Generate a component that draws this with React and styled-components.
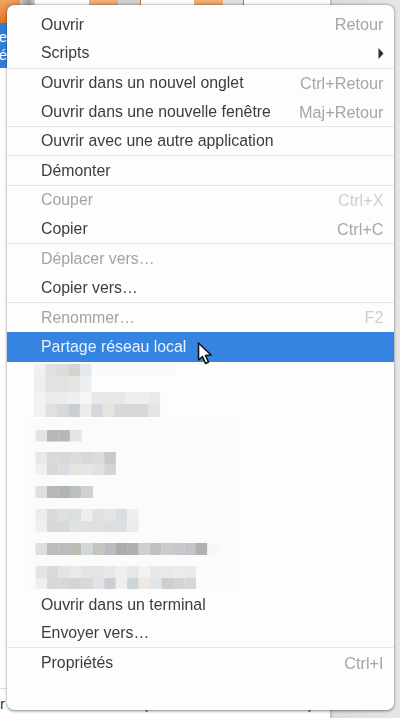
import React from "react";
import styled, { createGlobalStyle } from "styled-components";

const Global = createGlobalStyle`
  html, body { margin: 0; padding: 0; background: #fff; }
  body { width: 400px; height: 718px; overflow: hidden; font-family: "Liberation Sans", Arial, sans-serif; }
`;

const Stage = styled.div`
  position: relative;
  width: 400px;
  height: 718px;
  overflow: hidden;
  display: flex;
`;

const Files = styled.div`
  width: 330px;
  height: 718px;
  background: #fff;
  display: flex;
  flex-direction: column;
`;

const Side = styled.div`
  flex: 1;
  background: linear-gradient(90deg, #b8b8b8 0, #dcdcdc 3px, #e6e6e6 100%);
`;

const Strip = styled.div`
  display: flex;
  height: 23px;
`;

const Piece = styled.div`
  width: ${p => p.$w}px;
  background: ${p => p.$bg};
  ${p => p.$edge ? "border-right: 1px solid #d2604a; box-sizing: border-box;" : ""}
`;

const Tile = styled.div`
  width: 7px;
  height: 45px;
  background: #2f7fd8;
  color: #fff;
  font-size: 15px;
  line-height: 18px;
  display: flex;
  flex-direction: column;
  align-items: flex-end;
  padding-top: 5px;
  box-sizing: border-box;
  overflow: hidden;
`;

const FooterRule = styled.div`
  height: 1px;
  background: #dcdcdc;
  margin-top: auto;
  margin-bottom: 7px;
`;

const FooterLine = styled.div`
  display: flex;
  height: 22px;
  color: #333;
  font-size: 15px;
  line-height: 16px;
`;

const FooterMark = styled.span`
  width: ${p => p.$w}px;
  flex: none;
`;

const Menu = styled.div`
  position: absolute;
  left: 6.5px;
  top: 5px;
  width: 387px;
  height: 705px;
  box-sizing: border-box;
  padding-top: 5px;
  background: #fdfdfd;
  border-radius: 7px;
  box-shadow: 0 0.5px 3px rgba(0, 0, 0, 0.5);
  overflow: hidden;
`;

const Row = styled.div`
  height: 29.3px;
  box-sizing: border-box;
  display: flex;
  align-items: center;
  justify-content: space-between;
  padding: 0 10px 0 34.5px;
  font-size: 15.85px;
  white-space: nowrap;
  color: ${p => (p.$active ? "#eaf2fc" : p.$off ? "#a3a3a3" : "#3c3c3c")};
  background: ${p => (p.$active ? "#3584e2" : "transparent")};
  border-bottom: ${p => (p.$sep ? "1px solid #e6e6e6" : "none")};
`;

const Label = styled.span`
  filter: blur(0.25px);
`;

const Accel = styled.span`
  filter: blur(0.25px);
  font-size: 16.25px;
  color: ${p => (p.$off ? "#cfcfcf" : "#a6a6a6")};
`;

const SubArrow = styled.svg`
  width: 6px;
  height: 11px;
  fill: #2e2e2e;
`;

const Cursor = styled.svg`
  position: absolute;
  left: 190.5px;
  top: 337px;
  width: 16px;
  height: 23px;
`;

const Mosaic = styled.svg`
  display: block;
  width: 387px;
  height: 228.3px;
  filter: blur(0.7px);
`;

const CELL = 11.45;
const BLOCKS = [
  { y: 2, h: 12, x: 27, c: ["#f0f0f0", "#e0e0e0", "#dcdcdc", "#d5d3ce", "#e3e8ec"] },
  { y: 14, h: 16, x: 27, c: ["#eeeeee", "#e2e2e2", "#e2e2e2", "#e4e4e2", "#ecf0f2"] },
  { y: 30, h: 12, x: 27, c: ["#f2f2f2", "#e9ecee", "#e9ecee", "#efefed", "#f5f7f6", "#e8e8e8", "#e8e8e8", "#e8e8e8", "#edefef", "#edefef", "#e9e9e9"] },
  { y: 42, h: 13, x: 27, c: ["#f2f2f2", "#e0e0e0", "#d8d8d6", "#c8cfd4", "#ecece8", "#d4d8da", "#e4e4e0", "#d8d8d8", "#d8d8d8", "#d4d8d8", "#e4e4e4"] },
  { y: 68, h: 11.5, x: 28.5, c: ["#e4e4e4", "#b8b8b8", "#b8b8b8", "#e4e4e4"] },
  { y: 90, h: 12, x: 28.5, c: ["#e8e8e8", "#dadada", "#d8d8d8", "#dcdcdc", "#d8d8d8", "#dcdcdc", "#c8c8c8"] },
  { y: 102, h: 11, x: 28.5, c: ["#f0f0f0", "#d8d8d8", "#dcdce0", "#e4e4e0", "#e4e6ea", "#e0e2e2", "#d4d4d4"] },
  { y: 124, h: 12, x: 28.5, c: ["#e0e0e0", "#b8b8b8", "#b4b4b4", "#b8c0c4", "#d0d0d4"] },
  { y: 147, h: 12, x: 28.5, c: ["#ececec", "#d8dadc", "#e0e0e0", "#dcdfe2", "#eceff0", "#e0e0e0", "#e4e4e4", "#dcdde0", "#eeeeee"] },
  { y: 159, h: 11, x: 28.5, c: ["#f0f0f0", "#d8d8d8", "#d8d8d4", "#dfe3e6", "#e0e0e0", "#e0e0de", "#dcdfe0", "#dcdfe2", "#e9ebed"] },
  { y: 181, h: 12, x: 28.5, c: ["#dedede", "#bcbcbc", "#bcbcbc", "#bcbcb4", "#d0d8dc", "#c4c4c0", "#b8bcc0", "#acacac", "#b0b0b0", "#ccd0d4", "#c0c0c0", "#cccccc", "#c8c8cc", "#c4c4c8", "#b0b0ac", "#f4f8fb"] },
  { y: 204, h: 12, x: 28.5, c: ["#e4e4e4", "#d8dadc", "#e4e4e4", "#e8eaec", "#e4e4e4", "#e4e4e4", "#e8e8ea", "#f0f0ee", "#e6e8e8", "#f2f2f0", "#e4eaec", "#ece8e6", "#ebebeb", "#e8eaea"] },
  { y: 216, h: 11, x: 28.5, c: ["#eeeeee", "#d8d8d8", "#d8d8d8", "#d4d4d4", "#d8d8d8", "#dfe3e6", "#ccced0", "#f0eeea", "#ccd4d8", "#eee8e4", "#e0e6ea", "#d0cecc", "#d4d4d4", "#d4d8da"] },
];

const TOP = [
  { label: "Ouvrir", accel: "Retour" },
  { label: "Scripts", arrow: true, sep: true },
  { label: "Ouvrir dans un nouvel onglet", accel: "Ctrl+Retour" },
  { label: "Ouvrir dans une nouvelle fenêtre", accel: "Maj+Retour", sep: true },
  { label: "Ouvrir avec une autre application", sep: true },
  { label: "Démonter", sep: true },
  { label: "Couper", accel: "Ctrl+X", off: true },
  { label: "Copier", accel: "Ctrl+C", sep: true },
  { label: "Déplacer vers…", off: true },
  { label: "Copier vers…", sep: true },
  { label: "Renommer…", accel: "F2", off: true },
  { label: "Partage réseau local", active: true },
];

const BOTTOM = [
  { label: "Ouvrir dans un terminal" },
  { label: "Envoyer vers…", sep: true },
  { label: "Propriétés", accel: "Ctrl+I" },
];

const Item = ({ label, accel, arrow, sep, off, active }) => (
  <Row $sep={sep} $off={off} $active={active}>
    <Label>{label}</Label>
    {accel && <Accel $off={off}>{accel}</Accel>}
    {arrow && (
      <SubArrow viewBox="0 0 6 11">
        <path d="M0.5 0 L5.5 5.5 L0.5 11 Z" />
      </SubArrow>
    )}
  </Row>
);

export default function App() {
  return (
    <Stage>
      <Global />
      <Files>
        <Strip>
          <Piece $w={20} $bg="linear-gradient(160deg, #f0a868 0%, #e9853a 50%, #d9601c 100%)" />
          <Piece $w={15} $bg="linear-gradient(90deg, #c8c8c8, #9a9a9a 60%, #d0d0d0)" />
          <Piece $w={54} $bg="#ffffff" />
          <Piece $w={29} $bg="linear-gradient(180deg, #f0b07a 0%, #e8924a 40%, #e8924a 100%)" />
          <Piece $w={23} $bg="#d0d0d0" $edge />
          <Piece $w={53} $bg="#ffffff" />
          <Piece $w={29} $bg="linear-gradient(180deg, #f0b07a 0%, #e8924a 40%, #e8924a 100%)" />
          <Piece $w={21} $bg="#e0e0e0" $edge />
        </Strip>
        <Tile>
          <span>e</span>
          <span>é</span>
        </Tile>
        <FooterRule />
        <FooterLine>
          <FooterMark $w={143}>r</FooterMark>
          <FooterMark $w={165}>(</FooterMark>
          <FooterMark $w={10}>)</FooterMark>
        </FooterLine>
      </Files>
      <Side />
      <Menu>
        {TOP.map(r => <Item key={r.label} {...r} />)}
        <Mosaic viewBox="0 0 387 228.3">
          <rect x="27" y="2" width="141" height="12" fill="#fafafa" />
          <rect x="17" y="57" width="217" height="170" fill="#fbfbfb" />
          {BLOCKS.map(b =>
            b.c.map((color, i) => (
              <rect key={`${b.y}-${i}`} x={b.x + i * CELL} y={b.y} width={CELL + 0.2} height={b.h} fill={color} />
            ))
          )}
        </Mosaic>
        {BOTTOM.map(r => <Item key={r.label} {...r} />)}
        <Cursor viewBox="0 0 16 23">
          <path d="M1.5 1 L1.5 18 L5.5 14.5 L8.5 21.5 L11.5 20 L8.5 13.5 L14 13 Z" fill="#fff" stroke="#111" strokeWidth="1.6" strokeLinejoin="round" />
        </Cursor>
      </Menu>
    </Stage>
  );
}
